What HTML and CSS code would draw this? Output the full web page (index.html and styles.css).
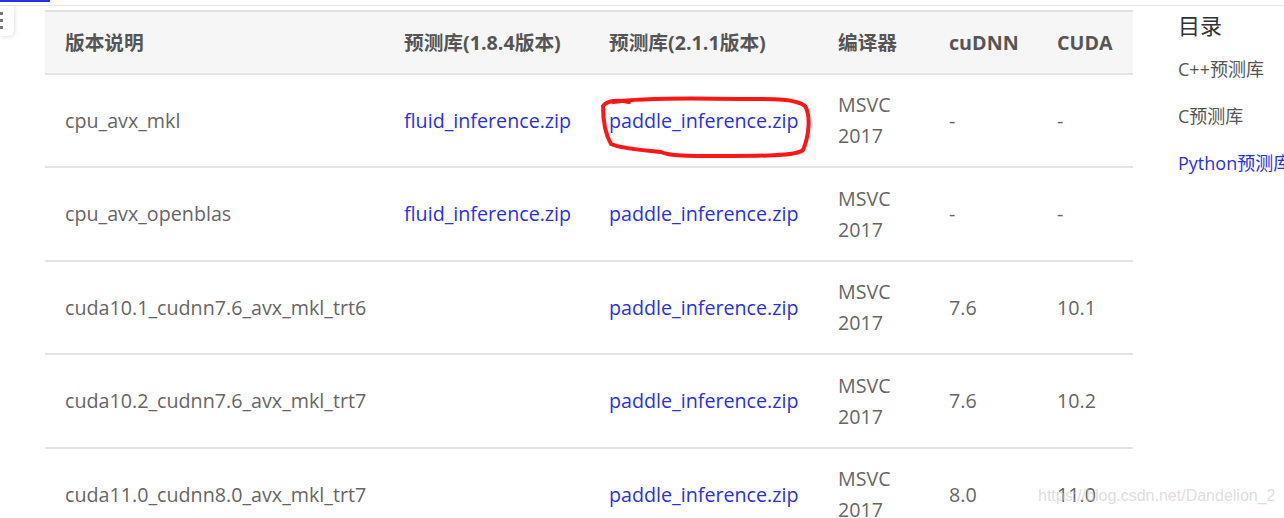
FILE: index.html
```html
<!DOCTYPE html>
<html lang="zh">
<head>
<meta charset="utf-8">
<link rel="stylesheet" href="styles.css">
</head>
<body>
<div class="topbar"><span class="progress"></span></div>
<div class="side-handle"><span></span><span></span><span></span></div>
<div class="page">
  <main class="content">
    <table class="lib-table">
      <thead>
        <tr>
          <th class="c1">版本说明</th>
          <th class="c2">预测库(1.8.4版本)</th>
          <th class="c3">预测库(2.1.1版本)</th>
          <th class="c4">编译器</th>
          <th class="c5">cuDNN</th>
          <th class="c6">CUDA</th>
        </tr>
      </thead>
      <tbody>
        <tr>
          <td>cpu_avx_mkl</td>
          <td><a>fluid_inference.zip</a></td>
          <td class="circled"><a>paddle_inference.zip</a>
            <svg class="scribble" width="214" height="64" viewBox="0 0 214 64"><path d="M14 6 C40 2, 90 2, 140 3 C170 3, 196 2, 206 10 C212 20, 210 40, 204 54 C198 60, 160 60, 120 60 C90 60, 70 60, 62 56 C40 54, 20 52, 12 48 C6 38, 4 24, 4 10 C8 4, 20 4, 30 6" fill="none" stroke="#ff1616" stroke-width="4" stroke-linecap="round" stroke-linejoin="round"/></svg>
          </td>
          <td>MSVC<br>2017</td>
          <td>-</td>
          <td>-</td>
        </tr>
        <tr>
          <td>cpu_avx_openblas</td>
          <td><a>fluid_inference.zip</a></td>
          <td><a>paddle_inference.zip</a></td>
          <td>MSVC<br>2017</td>
          <td>-</td>
          <td>-</td>
        </tr>
        <tr>
          <td>cuda10.1_cudnn7.6_avx_mkl_trt6</td>
          <td></td>
          <td><a>paddle_inference.zip</a></td>
          <td>MSVC<br>2017</td>
          <td>7.6</td>
          <td>10.1</td>
        </tr>
        <tr>
          <td>cuda10.2_cudnn7.6_avx_mkl_trt7</td>
          <td></td>
          <td><a>paddle_inference.zip</a></td>
          <td>MSVC<br>2017</td>
          <td>7.6</td>
          <td>10.2</td>
        </tr>
        <tr>
          <td>cuda11.0_cudnn8.0_avx_mkl_trt7</td>
          <td></td>
          <td><a>paddle_inference.zip</a></td>
          <td>MSVC<br>2017</td>
          <td>8.0</td>
          <td>11.0</td>
        </tr>
      </tbody>
    </table>
  </main>
  <aside class="toc">
    <div class="toc-title">目录</div>
    <div class="toc-item">C++预测库</div>
    <div class="toc-item">C预测库</div>
    <div class="toc-item active">Python预测库</div>
  </aside>
</div>
<div class="watermark">https://blog.csdn.net/Dandelion_2</div>
</body>
</html>
```
FILE: styles.css
```css
html, body {
  margin: 0;
  padding: 0;
  background: #fff;
  width: 1284px;
  height: 518px;
  overflow: hidden;
  font-family: "Open Sans", "Noto Sans CJK SC", sans-serif;
}
.topbar {
  height: 5px;
  border-bottom: 1px solid #e6e6e6;
  position: relative;
}
.progress {
  position: absolute;
  left: 0;
  top: 0;
  width: 50px;
  height: 2px;
  background: #2932e1;
}
.side-handle {
  position: absolute;
  left: 0;
  top: 6px;
  width: 14px;
  height: 30px;
  background: #fff;
  border-radius: 0 0 6px 0;
  box-shadow: 1px 1px 4px rgba(0,0,0,0.12);
  display: flex;
  flex-direction: column;
  gap: 4px;
  padding-top: 6px;
  box-sizing: border-box;
}
.side-handle span {
  display: block;
  width: 3px;
  height: 3px;
  background: #777;
}
.page {
  display: flex;
  padding-left: 45px;
  padding-top: 4px;
}
.content {
  width: 1088px;
  flex: none;
}
.lib-table {
  border-collapse: collapse;
  width: 1088px;
  table-layout: fixed;
  font-size: 19.7px;
  color: #666;
}
.lib-table th {
  background: #f6f6f6;
  color: #555;
  font-weight: 700;
  text-align: left;
  padding: 14.5px 10px 15px 20px;
  line-height: 31px;
  border-top: 2px solid #dfe1e5;
  border-bottom: 2px solid #e3e4e8;
  white-space: nowrap;
}
.c1 { width: 309px; }
.c2 { width: 175px; }
.c3 { width: 199px; }
.c4 { width: 81px; }
.c5 { width: 78px; }
.c6 { width: 66px; }
.lib-table td {
  padding: 14.75px 10px 14.75px 20px;
  line-height: 31px;
  border-bottom: 2px solid #e3e4e8;
  vertical-align: middle;
  white-space: nowrap;
}
.lib-table a {
  color: #2932e1;
  text-decoration: none;
}
.circled {
  position: relative;
}
.scribble {
  position: absolute;
  left: 10px;
  top: 21px;
}
.toc {
  margin-left: 45px;
  padding-top: 0;
  white-space: nowrap;
}
.toc-title {
  font-size: 22px;
  color: #333;
  line-height: 30px;
  margin-bottom: 17px;
}
.toc-item {
  font-size: 18px;
  color: #555;
  line-height: 24px;
  margin-bottom: 23px;
}
.toc-item.active {
  color: #2932e1;
}
.watermark {
  position: absolute;
  left: 1038px;
  top: 487px;
  font-family: "Liberation Sans", Arial, sans-serif;
  font-size: 16px;
  color: rgba(200,200,200,0.6);
  white-space: nowrap;
}
```
